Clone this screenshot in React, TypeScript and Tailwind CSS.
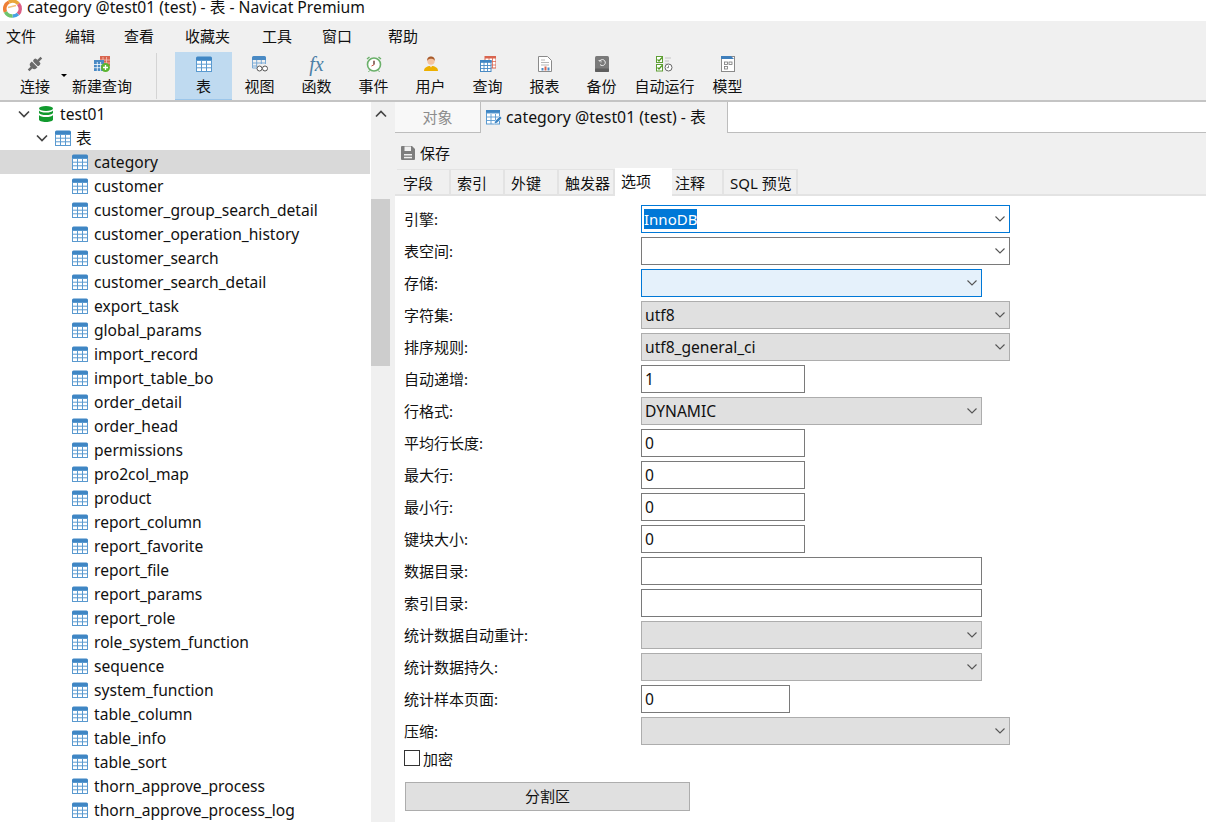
const tables = [
  'category', 'customer', 'customer_group_search_detail', 'customer_operation_history', 'customer_search',
  'customer_search_detail', 'export_task', 'global_params', 'import_record', 'import_table_bo', 'order_detail',
  'order_head', 'permissions', 'pro2col_map', 'product', 'report_column', 'report_favorite', 'report_file',
  'report_params', 'report_role', 'role_system_function', 'sequence', 'system_function', 'table_column',
  'table_info', 'table_sort', 'thorn_approve_process', 'thorn_approve_process_log',
]

const menus = [
  ['文件', 'ml-[6px]'],
  ['编辑', 'ml-[29px]'],
  ['查看', 'ml-[29px]'],
  ['收藏夹', 'ml-[31px]'],
  ['工具', 'ml-[32px]'],
  ['窗口', 'ml-[30px]'],
  ['帮助', 'ml-[36px]'],
]

function TableIcon({ className = 'w-4 h-4' }: { className?: string }) {
  return (
    <svg viewBox="0 0 16 16" className={className}>
      <path d="M0 2a1.500 1.500 0 0 1 1.500-1.500h13A1.500 1.500 0 0 1 16 2v3H0z" fill="#3f86c4" />
      <rect x="0.500" y="4.500" width="15" height="11" fill="#fff" stroke="#5a9ad0" />
      <path d="M5.500 5v10M10.500 5v10M1 8.200h14M1 11.800h14" stroke="#5a9ad0" strokeWidth="1" fill="none" />
    </svg>
  )
}

function Chevron({ className = '' }: { className?: string }) {
  return (
    <svg viewBox="0 0 12 8" className={`w-[12px] h-[8px] ${className}`}>
      <path d="M1 1.500 6 6.500 11 1.500" fill="none" stroke="#444" strokeWidth="1.700" />
    </svg>
  )
}

function SmallChevron() {
  return (
    <svg viewBox="0 0 10 6" className="w-[10px] h-[6px] shrink-0">
      <path d="M0.500 0.500 5 5 9.500 0.500" fill="none" stroke="#555" strokeWidth="1.100" />
    </svg>
  )
}

function Logo() {
  return (
    <svg viewBox="0 0 20 21" className="w-[20px] h-[21px] ml-[3px] mt-[-1px] shrink-0">
      <path d="M2.500 13A7.500 7.500 0 0 1 6 3" fill="none" stroke="#ee7f35" strokeWidth="3.600" />
      <path d="M6 3A7.500 7.500 0 0 1 15.500 5" fill="none" stroke="#e9a63a" strokeWidth="3.600" />
      <path d="M15.500 5A7.500 7.500 0 0 1 15 15" fill="none" stroke="#dc5f86" strokeWidth="3.600" />
      <path d="M15 15A7.500 7.500 0 0 1 9.500 17" fill="none" stroke="#46a2e2" strokeWidth="3.600" />
      <path d="M9.500 17A7.500 7.500 0 0 1 2.500 13" fill="none" stroke="#70c46c" strokeWidth="3.600" />
      <path d="M5 8.500 13 6.500" stroke="#f3c27a" strokeWidth="1.500" />
    </svg>
  )
}

const ConnectIcon = () => (
  <svg viewBox="0 0 16 16" className="w-4 h-4">
    <g transform="rotate(45 8 8)" fill="#6a6a6a">
      <rect x="4" y="3.500" width="8" height="4" rx="1.500" />
      <rect x="6.800" y="-1" width="2.400" height="5" />
      <path d="M4 8.500h8V10a3 3 0 0 1-3 3h-2a3 3 0 0 1-3-3z" />
      <rect x="6.800" y="12" width="2.400" height="5" />
    </g>
  </svg>
)

const NewQueryIcon = () => (
  <svg viewBox="0 0 16 16" className="w-4 h-4">
    <rect x="6" y="0" width="10" height="10" fill="#d9654f" />
    <path d="M9 1v9M12.500 1v9M6 4h10M6 7h10" stroke="#f2c5bb" strokeWidth="0.800" />
    <rect x="0" y="4" width="10" height="11" fill="#4a8ac4" />
    <path d="M3.300 6v9M6.600 6v9M0 8.500h10M0 11.700h10" stroke="#fff" strokeWidth="0.800" />
    <circle cx="11.500" cy="11.500" r="4.500" fill="#5cb531" />
    <path d="M11.500 9v5M9 11.500h5" stroke="#fff" strokeWidth="1.300" />
  </svg>
)

const ViewIcon = () => (
  <svg viewBox="0 0 16 16" className="w-4 h-4">
    <path d="M0 1.500A1.500 1.500 0 0 1 1.500 0h11A1.500 1.500 0 0 1 14 1.500V4H0z" fill="#4a8ac4" />
    <path d="M.5 4v8h5M13.500 4v4M4.700 4v7M9.300 4v4M1 7h12M1 10h4" stroke="#6da3d2" fill="none" strokeWidth="0.900" />
    <circle cx="7.500" cy="12.500" r="2.500" fill="#fff" stroke="#555" />
    <circle cx="13" cy="12.500" r="2.500" fill="#fff" stroke="#555" />
  </svg>
)

const ClockIcon = () => (
  <svg viewBox="0 0 16 16" className="w-4 h-4">
    <circle cx="8" cy="8.500" r="6.500" fill="#fff" stroke="#6bb06a" strokeWidth="1.600" />
    <path d="M8 4.500v4.200L5.500 10" stroke="#c9503c" strokeWidth="1" fill="none" />
    <path d="M8 5v3.500" stroke="#444" strokeWidth="1" />
    <path d="M1 3 3.500 1M15 3 12.500 1" stroke="#6bb06a" strokeWidth="1.400" />
    <path d="M3.500 14.500 2.500 16M12.500 14.500 13.500 16" stroke="#6bb06a" strokeWidth="1" />
  </svg>
)

const UserIcon = () => (
  <svg viewBox="0 0 16 16" className="w-4 h-4">
    <path d="M1 15c0-3.500 3-4.500 5-5h4c2 .5 5 1.500 5 5z" fill="#edb000" />
    <circle cx="8" cy="5" r="3.700" fill="#f4c3a0" />
    <path d="M4.200 5C4 1.500 6 .5 8 .5s4 1 3.800 4.500C11 3.200 9.500 2.800 8 2.800S5 3.200 4.200 5z" fill="#a85a2a" />
    <path d="M6.500 9.500h3L8 11.500z" fill="#fbe3cf" />
  </svg>
)

const QueryIcon = () => (
  <svg viewBox="0 0 16 16" className="w-4 h-4">
    <rect x="5" y="0" width="11" height="12" fill="#fff" stroke="#d9654f" />
    <rect x="5" y="0" width="11" height="2.500" fill="#d9654f" />
    <path d="M9 1v11M12.500 1v11M5 5.500h11M5 9h11" stroke="#d9654f" strokeWidth="0.800" />
    <rect x="0.500" y="4.500" width="10.500" height="11" fill="#fff" stroke="#4a8ac4" />
    <rect x="0" y="4" width="11.500" height="2.800" fill="#3f86c4" />
    <path d="M4 6v9.500M7.500 6v9.500M.5 9.500h10.500M.5 12.500h10.500" stroke="#4a8ac4" strokeWidth="0.900" />
  </svg>
)

const ReportIcon = () => (
  <svg viewBox="0 0 14 16" className="w-[14px] h-4">
    <path d="M.5.500h9l4 4v11H.5z" fill="#fff" stroke="#8a8a8a" />
    <path d="M3 4h4M3 6.500h8M3 9h8" stroke="#a5a5a5" strokeWidth="0.800" />
    <rect x="3.500" y="12" width="2" height="2.500" fill="#4a8ac4" />
    <rect x="6.500" y="10.500" width="2" height="4" fill="#d9654f" />
    <rect x="9.500" y="11.500" width="2" height="3" fill="#4a8ac4" />
  </svg>
)

const BackupIcon = () => (
  <svg viewBox="0 0 14 16" className="w-[14px] h-4">
    <rect x="0" y="0" width="14" height="16" rx="1.500" fill="#7a7a7a" />
    <rect x="0" y="12.500" width="14" height="3.500" rx="1" fill="#5e5e5e" />
    <path d="M4.500 5.500A3 3 0 1 1 5 8.500" fill="none" stroke="#eee" strokeWidth="1" />
    <path d="M3.500 4.500h2.500v2" fill="none" stroke="#eee" strokeWidth="0.800" />
  </svg>
)

const AutoIcon = () => (
  <svg viewBox="0 0 17 16" className="w-[17px] h-4">
    <rect x="0.500" y="0.500" width="6" height="6" fill="#fff" stroke="#5e9e33" />
    <rect x="0.500" y="8.500" width="6" height="6.500" fill="#fff" stroke="#5e9e33" />
    <path d="M1.500 3.500 3 5l3-3.500M1.500 11.500 3 13l3-3.500" fill="none" stroke="#4f9a1f" strokeWidth="1.200" />
    <path d="M9 2h6M9 5h4M9 8h3" stroke="#c4c4c4" strokeWidth="1" />
    <circle cx="12.500" cy="11.500" r="3.500" fill="#fff" stroke="#666" />
    <path d="M12.500 9.500v2.200h-1.700" fill="none" stroke="#666" strokeWidth="0.800" />
  </svg>
)

const ModelIcon = () => (
  <svg viewBox="0 0 14 16" className="w-[14px] h-4">
    <rect x="0.500" y="0.500" width="13" height="15" fill="#fff" stroke="#8a8a8a" />
    <path d="M0 0h10l3 3H0z" fill="#3f7fbc" />
    <rect x="3.500" y="6" width="3" height="2.500" fill="none" stroke="#777" strokeWidth="0.800" />
    <rect x="8" y="6" width="3" height="2.500" fill="none" stroke="#777" strokeWidth="0.800" />
    <rect x="3.500" y="10.500" width="3" height="2.500" fill="none" stroke="#777" strokeWidth="0.800" />
  </svg>
)

const tools = [
  { label: '视图', icon: <ViewIcon /> },
  { label: '函数', icon: <span className="font-['Liberation_Serif',serif] italic text-[20px] leading-4 text-[#4c7fa6]">fx</span> },
  { label: '事件', icon: <ClockIcon /> },
  { label: '用户', icon: <UserIcon /> },
  { label: '查询', icon: <QueryIcon /> },
  { label: '报表', icon: <ReportIcon /> },
  { label: '备份', icon: <BackupIcon /> },
  { label: '自动运行', icon: <AutoIcon />, wide: true },
  { label: '模型', icon: <ModelIcon /> },
]

function ToolButton({ label, icon, className = 'w-[57px]' }: { label: string; icon: React.ReactNode; className?: string }) {
  return (
    <div className={`h-[48px] flex flex-col items-center shrink-0 ${className}`}>
      <div className="h-[16px] mt-[4px] flex items-center justify-center">{icon}</div>
      <div className="mt-[4px] leading-[20px] whitespace-nowrap">{label}</div>
    </div>
  )
}

type FieldProps = {
  label: string
  value?: string
  kind?: 'select' | 'input'
  width: string
  look?: 'normal' | 'focus' | 'hover' | 'off'
  selected?: boolean
}

const fields: FieldProps[] = [
  { label: '引擎:', value: 'InnoDB', width: 'w-[369px]', look: 'focus', selected: true },
  { label: '表空间:', width: 'w-[369px]' },
  { label: '存储:', width: 'w-[341px]', look: 'hover' },
  { label: '字符集:', value: 'utf8', width: 'w-[369px]', look: 'off' },
  { label: '排序规则:', value: 'utf8_general_ci', width: 'w-[369px]', look: 'off' },
  { label: '自动递增:', value: '1', kind: 'input', width: 'w-[164px]' },
  { label: '行格式:', value: 'DYNAMIC', width: 'w-[341px]', look: 'off' },
  { label: '平均行长度:', value: '0', kind: 'input', width: 'w-[164px]' },
  { label: '最大行:', value: '0', kind: 'input', width: 'w-[164px]' },
  { label: '最小行:', value: '0', kind: 'input', width: 'w-[164px]' },
  { label: '键块大小:', value: '0', kind: 'input', width: 'w-[164px]' },
  { label: '数据目录:', kind: 'input', width: 'w-[341px]' },
  { label: '索引目录:', kind: 'input', width: 'w-[341px]' },
  { label: '统计数据自动重计:', width: 'w-[341px]', look: 'off' },
  { label: '统计数据持久:', width: 'w-[341px]', look: 'off' },
  { label: '统计样本页面:', value: '0', kind: 'input', width: 'w-[149px]' },
  { label: '压缩:', width: 'w-[369px]', look: 'off' },
]

const looks = {
  normal: 'bg-white border-[#7a7a7a]',
  focus: 'bg-white border-[#0078d7]',
  hover: 'bg-[#e5f1fb] border-[#0078d7]',
  off: 'bg-[#e0e0e0] border-[#adadad]',
}

function Field({ label, value, kind = 'select', width, look = 'normal', selected }: FieldProps) {
  return (
    <div className="h-[32px] flex items-center">
      <div className="w-[246px] pl-[9px] shrink-0">{label}</div>
      <div className={`h-[28px] border flex items-center pl-[3px] pr-[4px] justify-between text-[15.6px] ${width} ${looks[look]}`}>
        {selected ? <span className="bg-[#0078d7] text-white text-[15px] ml-[-1px] leading-[20px]">{value}</span> : <span className="leading-[20px]">{value}</span>}
        {kind === 'select' && <SmallChevron />}
      </div>
    </div>
  )
}

const subTabs = [
  ['字段', 'w-[54px] pl-[6px]'],
  ['索引', 'w-[54px] pl-[6px]'],
  ['外键', 'w-[54px] pl-[6px]'],
  ['触发器', 'w-[56px] pl-[6px]'],
  ['选项', 'w-[57px] pl-[6px]'],
  ['注释', 'w-[52px] pl-[3px]'],
  ['SQL 预览', 'w-[74px] pl-[6px]'],
]

export default function App() {
  return (
    <div className="w-[1206px] h-[822px] overflow-hidden bg-white text-[15px] text-[#111] font-['Noto_Sans','Noto_Sans_CJK_SC',sans-serif] flex flex-col">
      <div className="h-[21px] flex items-start shrink-0 overflow-hidden">
        <Logo />
        <span className="ml-[4px] text-[15.7px] leading-[14px] whitespace-nowrap">category @test01 (test) - 表 - Navicat Premium</span>
      </div>

      <div className="h-[29px] bg-[#f0f0f0] flex items-center shrink-0">
        {menus.map(([name, ml]) => (
          <span key={name} className={`${ml} leading-[20px]`}>{name}</span>
        ))}
      </div>

      <div className="h-[52px] bg-[#f0f0f0] border-b-2 border-[#c4c4c4] flex items-start pt-[2px] shrink-0">
        <div className="relative">
          <ToolButton label="连接" icon={<ConnectIcon />} className="w-[70px]" />
          <div className="absolute left-[61px] top-[22px] border-x-[3px] border-x-transparent border-t-[3px] border-t-black" />
        </div>
        <ToolButton label="新建查询" icon={<NewQueryIcon />} className="w-[66px] ml-[-1px]" />
        <div className="w-px h-[46px] bg-[#d4d4d4] ml-[21px] mr-[18px] mt-px" />
        <ToolButton label="表" icon={<TableIcon />} className="w-[57px] mr-[-1px] bg-[#bfdaf0] border-b border-[#9cc6ea]" />
        {tools.map((t) => (
          <ToolButton key={t.label} label={t.label} icon={t.icon} className={t.wide ? 'w-[69px]' : 'w-[57px]'} />
        ))}
      </div>

      <div className="flex-1 flex min-h-0">
        <div className="w-[370px] shrink-0 overflow-hidden text-[15.6px]">
          <div className="h-[24px] flex items-center pl-[18px]">
            <Chevron />
            <svg viewBox="0 0 14 16" className="w-[14px] h-4 ml-[9px]">
              <ellipse cx="7" cy="2.500" rx="7" ry="2.500" fill="#119a2e" />
              <path d="M0 4.500c1 1.500 3.500 2 7 2s6-.5 7-2v2.500c-1 1.500-3.500 2-7 2s-6-.5-7-2z" fill="#119a2e" />
              <path d="M0 9c1 1.500 3.500 2 7 2s6-.5 7-2v4.500C14 15 11 16 7 16s-7-1-7-2.500z" fill="#119a2e" />
            </svg>
            <span className="ml-[7px] mt-[2px]">test01</span>
          </div>
          <div className="h-[24px] flex items-center pl-[36px]">
            <Chevron />
            <TableIcon className="w-4 h-4 ml-[7px]" />
            <span className="ml-[5px] mt-[2px]">表</span>
          </div>
          {tables.map((name, i) => (
            <div key={name} className={`h-[24px] flex items-center pl-[72px] ${i === 0 ? 'bg-[#d9d9d9]' : ''}`}>
              <TableIcon />
              <span className="ml-[6px] mt-[2px] whitespace-nowrap">{name}</span>
            </div>
          ))}
        </div>

        <div className="w-[24px] ml-px shrink-0 bg-[#f0f0f0] flex flex-col">
          <div className="w-[19px] h-[24px] flex items-center justify-center">
            <Chevron className="rotate-180" />
          </div>
          <div className="w-[19px] h-[167px] mt-[73px] bg-[#cdcdcd]" />
        </div>

        <div className="flex-1 flex flex-col min-w-0">
          <div className="h-[31px] flex shrink-0">
            <div className="w-[86px] bg-[#f8f8f8] border-b border-r border-[#bdbdbd] flex items-center justify-center text-[#8c8c8c]">对象</div>
            <div className="w-[246px] bg-[#f0f0f0] flex items-center pl-[5px] whitespace-nowrap text-[15.8px]">
              <svg viewBox="0 0 16 16" className="w-4 h-4">
                <rect x="0" y="0" width="14" height="3.500" fill="#3f86c4" />
                <rect x="0.500" y="3" width="13" height="11" fill="#fff" stroke="#5a9ad0" />
                <path d="M5 4v10M9.500 4v10M1 7h12M1 10.500h12" stroke="#5a9ad0" strokeWidth="0.900" />
                <path d="M8 14l1-3 5-5 2 2-5 5z" fill="#3f86c4" stroke="#fff" strokeWidth="0.500" />
              </svg>
              <span className="ml-[4px]">category @test01 (test) - 表</span>
            </div>
            <div className="flex-1 border-b border-l border-[#bdbdbd]" />
          </div>

          <div className="h-[35px] bg-[#f0f0f0] flex items-center pl-[6px] pt-[5px] shrink-0">
            <svg viewBox="0 0 14 14" className="w-[14px] h-[14px]">
              <path d="M0 1a1 1 0 0 1 1-1h10l3 3v10a1 1 0 0 1-1 1H1a1 1 0 0 1-1-1z" fill="#7d7d7d" />
              <rect x="3.500" y="0.500" width="6.500" height="4.500" fill="#f0f0f0" />
              <rect x="3" y="8" width="8" height="1.500" fill="#f0f0f0" />
              <rect x="3" y="10.800" width="8" height="1.500" fill="#f0f0f0" />
            </svg>
            <span className="ml-[5px]">保存</span>
          </div>

          <div className="h-[28px] bg-[#f0f0f0] border-b-[2px] border-[#e3e3e3] flex items-end pl-[2px] shrink-0">
            {subTabs.map(([name, w]) => (
              name === '选项' ? (
                <div key={name} className={`${w} h-[28px] mb-[-2px] bg-white pt-[1px] leading-[24px] whitespace-nowrap`}>{name}</div>
              ) : (
                <div key={name} className={`${w} h-[25px] border-t border-r-2 border-[#e3e3e3] leading-[26px] whitespace-nowrap`}>{name}</div>
              )
            ))}
          </div>

          <div className="flex-1 pt-[7px]">
            {fields.map((f) => (
              <Field key={f.label} {...f} />
            ))}
            <div className="h-[22px] mt-[1px] flex items-center pl-[9px]">
              <div className="w-[16px] h-[16px] border border-[#333] bg-white mt-[-2px]" />
              <span className="ml-[3px]">加密</span>
            </div>
            <div className="ml-[10px] mt-[12px] w-[285px] h-[29px] bg-[#e0e0e0] border border-[#adadad] flex items-center justify-center">分割区</div>
          </div>
        </div>
      </div>
    </div>
  )
}
